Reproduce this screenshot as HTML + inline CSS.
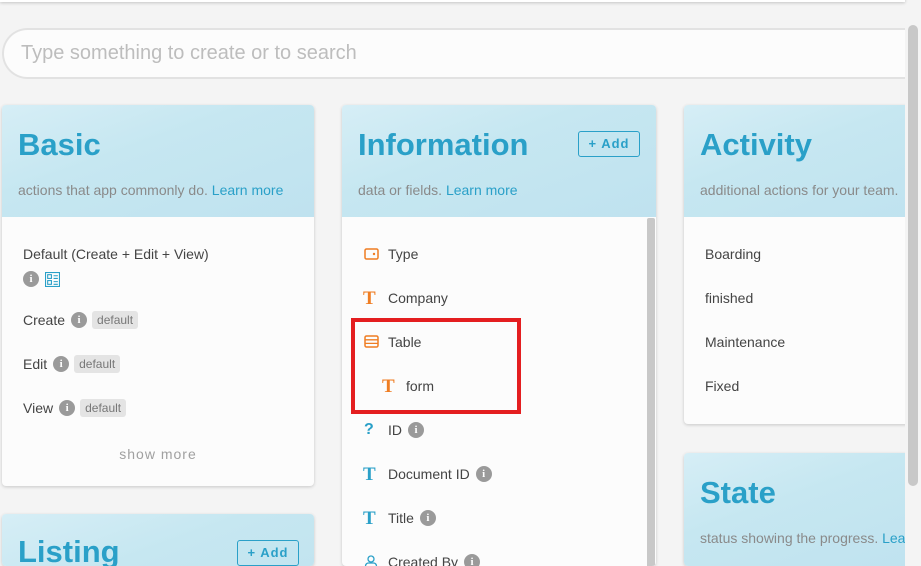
<!DOCTYPE html>
<html><head><meta charset="utf-8"><style>
*{box-sizing:border-box;margin:0;padding:0}
html,body{width:921px;height:566px;overflow:hidden}
body{background:#f4f4f4;font-family:"Liberation Sans",sans-serif;position:relative}
.topbar{position:absolute;left:0;top:-6px;width:905px;height:8px;background:#fff;box-shadow:0 1px 3px rgba(0,0,0,.2)}
.search{position:absolute;left:2px;top:28px;width:920px;height:51px;border:2px solid #e2e2e2;border-right:none;border-radius:26px 0 0 26px;background:#fcfcfc;color:#bdbdbd;font-size:20px;padding:12px 0 0 17px}
.clip{position:absolute;left:0;top:0;width:905px;height:566px;overflow:hidden}
.card{position:absolute;background:#fcfcfc;border-radius:4px;box-shadow:0 1px 3px rgba(0,0,0,.18);overflow:hidden}
.hd{height:112px;background:linear-gradient(160deg,#d6eef6 0%,#c6e7f1 40%,#bfe2ef 100%);position:relative}
.hd h1{position:absolute;left:16px;top:22px;font-size:31px;font-weight:bold;color:#2aa0c8}
.hd p{position:absolute;left:16px;top:77px;font-size:14px;color:#8a8a8a;white-space:nowrap}
.hd p a{color:#2aa0c8}
.add{position:absolute;border:1px solid #2aa0c8;border-radius:3px;color:#2aa0c8;font-size:13px;font-weight:bold;letter-spacing:1px;width:62px;height:26px;line-height:24px;text-align:center}
.it{position:absolute;font-size:14px;color:#444;white-space:nowrap;display:flex;align-items:center;height:20px}
.i{display:inline-block;width:16px;height:16px;border-radius:50%;background:#9a9a9a;color:#fff;font-size:11px;font-weight:bold;text-align:center;line-height:16px;margin-left:6px;font-family:"Liberation Serif",serif}
.tag{display:inline-block;background:#e4e4e4;color:#777;font-size:12px;padding:2px 5px;border-radius:3px;margin-left:5px}
.T{position:absolute;font-family:"Liberation Serif",serif;font-size:19px;font-weight:bold;line-height:1}
</style></head><body>
<div class="topbar"></div>
<div class="clip">
<div class="search">Type something to create or to search</div>

<div class="card" style="left:2px;top:105px;width:312px;height:381px">
 <div class="hd"><h1>Basic</h1><p>actions that app commonly do. <a>Learn more</a></p></div>
 <div class="it" style="left:21px;top:139px">Default (Create + Edit + View)</div>
 <div class="it" style="left:21px;top:164px"><span class="i" style="margin:0">i</span>
  <svg width="15" height="15" viewBox="0 0 14 14" style="margin-left:6px"><rect x=".5" y=".5" width="13" height="13" fill="none" stroke="#2aa0c8"/><rect x="2.5" y="2.5" width="3.5" height="3.5" fill="none" stroke="#2aa0c8"/><rect x="2.5" y="8" width="3.5" height="3.5" fill="none" stroke="#2aa0c8"/><path d="M8 3.5h4M8 6h4M8 9h4M8 11.5h4" stroke="#2aa0c8"/></svg></div>
 <div class="it" style="left:21px;top:205px">Create <span class="i">i</span><span class="tag">default</span></div>
 <div class="it" style="left:21px;top:249px">Edit <span class="i">i</span><span class="tag">default</span></div>
 <div class="it" style="left:21px;top:293px">View <span class="i">i</span><span class="tag">default</span></div>
 <div class="it" style="left:0;width:312px;justify-content:center;top:339px;color:#a0a0a0;letter-spacing:1px">show more</div>
</div>

<div class="card" style="left:2px;top:514px;width:312px;height:52px">
 <div class="hd"><h1 style="top:20px">Listing</h1><div class="add" style="left:235px;top:26px">+ Add</div></div>
</div>

<div class="card" style="left:342px;top:105px;width:314px;height:461px">
 <div class="hd"><h1>Information</h1><p>data or fields. <a>Learn more</a></p><div class="add" style="left:236px;top:26px">+ Add</div></div>
 <div style="position:absolute;left:305px;top:113px;width:8px;height:370px;background:#c8c8c8;border-radius:2px"></div>
 <svg style="position:absolute;left:22px;top:143px" width="15" height="12"><rect x="1" y="1" width="13" height="10" rx="1.5" fill="none" stroke="#ef7d22" stroke-width="1.5"/><circle cx="10" cy="6" r="1.2" fill="#ef7d22"/></svg>
 <div class="it" style="left:46px;top:139px">Type</div>
 <div class="T" style="left:21px;top:184px;color:#ef7d22">T</div>
 <div class="it" style="left:46px;top:183px">Company</div>
 <svg style="position:absolute;left:22px;top:230px" width="15" height="13"><rect x="1" y="1" width="13" height="11" rx="1.5" fill="none" stroke="#ef7d22" stroke-width="1.5"/><path d="M1 4.8h13M1 8.4h13" stroke="#ef7d22" stroke-width="1.3"/></svg>
 <div class="it" style="left:46px;top:227px">Table</div>
 <div class="T" style="left:40px;top:272px;color:#ef7d22">T</div>
 <div class="it" style="left:64px;top:271px">form</div>
 <div style="position:absolute;left:9px;top:213px;width:170px;height:96px;border:4px solid #e41e20"></div>
 <div class="it" style="left:22px;top:315px;color:#2aa0c8;font-weight:bold;font-size:16px">?</div>
 <div class="it" style="left:46px;top:315px">ID <span class="i">i</span></div>
 <div class="T" style="left:21px;top:360px;color:#2aa0c8">T</div>
 <div class="it" style="left:46px;top:359px">Document ID <span class="i">i</span></div>
 <div class="T" style="left:21px;top:404px;color:#2aa0c8">T</div>
 <div class="it" style="left:46px;top:403px">Title <span class="i">i</span></div>
 <svg style="position:absolute;left:22px;top:450px" width="14" height="14"><circle cx="7" cy="4" r="3" fill="none" stroke="#2aa0c8" stroke-width="1.3"/><path d="M1.5 13v-2a3 3 0 0 1 3-3h5a3 3 0 0 1 3 3v2z" fill="none" stroke="#2aa0c8" stroke-width="1.3"/></svg>
 <div class="it" style="left:46px;top:447px">Created By <span class="i">i</span></div>
</div>

<div class="card" style="left:684px;top:105px;width:260px;height:319px">
 <div class="hd"><h1>Activity</h1><p>additional actions for your team.</p></div>
 <div class="it" style="left:21px;top:139px">Boarding</div>
 <div class="it" style="left:21px;top:183px">finished</div>
 <div class="it" style="left:21px;top:227px">Maintenance</div>
 <div class="it" style="left:21px;top:271px">Fixed</div>
</div>

<div class="card" style="left:684px;top:453px;width:260px;height:113px">
 <div class="hd" style="height:113px"><h1 style="top:22px">State</h1><p>status showing the progress. <a>Learn more</a></p></div>
</div>
</div>
<div style="position:absolute;left:908px;top:25px;width:10px;height:461px;background:#c8c8c8;border-radius:5px"></div>
</body></html>
